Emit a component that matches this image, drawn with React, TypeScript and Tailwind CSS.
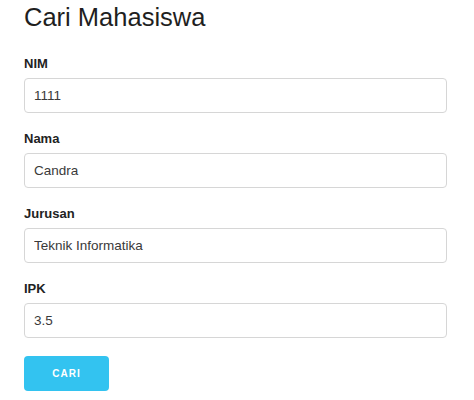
import { useState } from "react";

const FIELDS = [
  { key: "nim", label: "NIM", value: "1111" },
  { key: "nama", label: "Nama", value: "Candra" },
  { key: "jurusan", label: "Jurusan", value: "Teknik Informatika" },
  { key: "ipk", label: "IPK", value: "3.5" },
];

export default function App() {
  const [values, setValues] = useState<Record<string, string>>(
    Object.fromEntries(FIELDS.map((f) => [f.key, f.value])),
  );

  return (
    <div className="min-h-[400px] bg-white pl-[24px] pr-[27px] font-['Liberation_Sans',Arial,sans-serif]">
      <h1 className="mb-[20px] text-[25.5px] font-normal leading-[34px] text-[#1f1f1f]">
        Cari Mahasiswa
      </h1>

      <form onSubmit={(e) => e.preventDefault()}>
        {FIELDS.map((f) => (
          <label key={f.key} className="mb-[16px] block">
            <span className="mb-[4px] block text-[13px] font-bold leading-[20px] text-[#222]">
              {f.label}
            </span>
            <input
              value={values[f.key]}
              onChange={(e) =>
                setValues((v) => ({ ...v, [f.key]: e.target.value }))
              }
              className="block h-[35px] w-full rounded-[4px] border border-[#d6d6d6] bg-white px-[9px] text-[13.5px] text-[#3a3a3a] outline-none"
            />
          </label>
        ))}

        <button
          type="submit"
          className="mt-[2px] h-[35px] w-[85px] rounded-[4px] bg-[#33c3f0] text-[10px] font-bold uppercase tracking-[1px] text-white"
        >
          Cari
        </button>
      </form>
    </div>
  );
}
